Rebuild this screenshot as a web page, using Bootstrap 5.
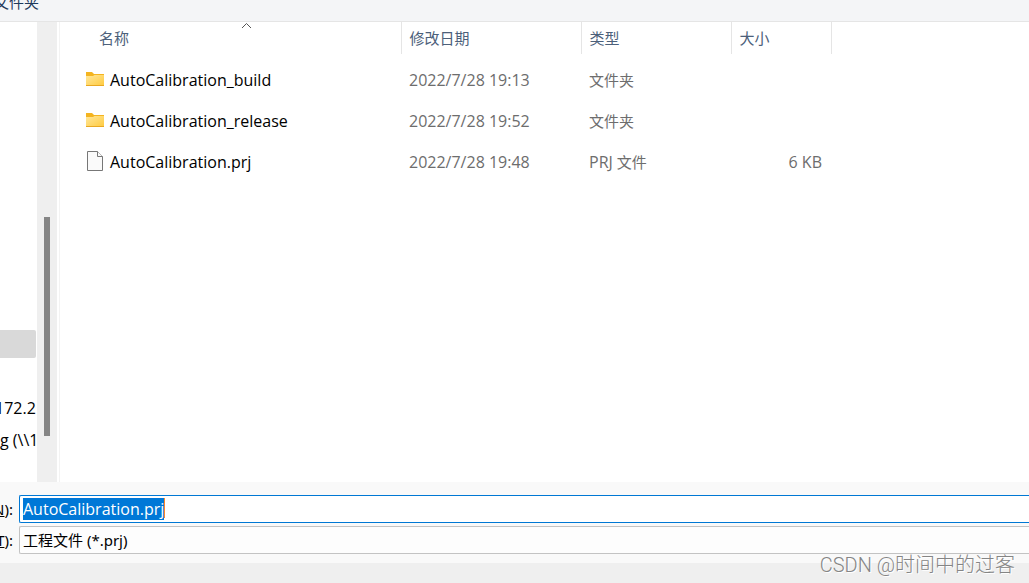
<!DOCTYPE html>
<html lang="zh-CN">
<head>
<meta charset="utf-8">
<meta name="viewport" content="width=device-width, initial-scale=1">
<title>另存为</title>
<link href="https://cdn.jsdelivr.net/npm/bootstrap@5.3.0/dist/css/bootstrap.min.css" rel="stylesheet">
<style>
body{font:15px/20px "Noto Sans","Noto Sans CJK SC",sans-serif;color:#000;background:#efefef}
.toolbar{height:22px;background:#f4f5f7;border-bottom:1px solid #e5e5e5;color:#1e395b}
.toolbar button{line-height:20px;margin:-8px 0 0 -6px;color:inherit;font-size:inherit}
.browser{background:#fff}
.tree{width:37px;padding-bottom:28px;gap:4px}
.tree a{height:28px;font:16px/28px "Open Sans",sans-serif;margin-right:1px;color:#000;white-space:nowrap;overflow:hidden}
.tree .current{background:#d9d9d9;border-radius:0 2px 2px 0;margin-bottom:32px}
.tree .clipped{text-indent:-5px}
.track{width:20px;background:#efefef;padding:195px 7px 46px}
.thumb{background:#858585;height:219px}
.pane{border-left:1px solid #f3f3f3;margin-left:2px}
.files{table-layout:fixed;width:771px}
.files th{height:32px;padding:0 8px;font-weight:400;color:#4c607a;border-right:1px solid #e5e5e5;position:relative}
.files th:first-child{padding-left:39px}
.files td{height:41px;padding:0 9px 0 8px;color:#6d6d6d}
.files td:first-child{padding-left:25px;color:#000}
.files .spacer td{height:5px}
.latin{font:16px/20px "Open Sans",sans-serif}
.icon{margin-right:5px}
.sort{top:0;left:181px}
.form-area{background:#f9f9f9;padding:13px 0 9px;gap:3px}
.form-area label{width:19px;padding-right:6px;height:28px;line-height:28px}
.field{height:28px;border:1px solid #c3c3c3;border-right:0;border-radius:2px 0 0 2px;background:#fdfdfd;padding:0 3px 1px;outline:0;color:#000;appearance:none;font:inherit}
.name-field{border-color:#0078d4;background:#fff;font:16px/20px "Open Sans",sans-serif}
.name-field::selection{background:#0078d7;color:#fff}
.caret{left:145px;top:3px;width:1px;height:20px;background:#ff8728}
.watermark{right:14px;bottom:4px;font:300 20px/28px Roboto,"Noto Sans CJK SC",sans-serif;color:#858585;text-shadow:1px 1px 0 #fff}
</style>
</head>
<body class="min-vh-100 d-flex flex-column overflow-hidden position-relative">
<header class="toolbar overflow-hidden"><button type="button" class="border-0 bg-transparent p-0 d-block">文件夹</button></header>
<main class="browser d-flex">
  <nav class="tree flex-shrink-0 d-flex flex-column justify-content-end" aria-label="导航">
    <a href="#" class="current d-block text-decoration-none" aria-label="当前文件夹"></a>
    <a href="#" class="clipped d-block text-decoration-none">172.20</a>
    <a href="#" class="d-block text-decoration-none">g (\\172</a>
  </nav>
  <div class="track flex-shrink-0"><div class="thumb"></div></div>
  <section class="pane flex-grow-1">
    <table class="files">
      <colgroup><col style="width:341px"><col style="width:180px"><col style="width:150px"><col style="width:100px"></colgroup>
      <thead><tr>
        <th scope="col">名称<svg class="sort position-absolute" width="11" height="7" viewBox="0 0 11 7" fill="none" stroke="#555"><path d="M1 6 5.500 1.500 10 6"/></svg></th>
        <th scope="col">修改日期</th><th scope="col">类型</th><th scope="col">大小</th>
      </tr></thead>
      <tbody>
        <tr class="spacer"><td colspan="4"></td></tr>
        <tr><td class="latin"><span class="d-flex align-items-center"><svg class="icon" width="20" height="20" viewBox="0 0 20 20"><defs><linearGradient id="fold" x2="1" y2="1"><stop stop-color="#ffe79b"/><stop offset="1" stop-color="#ffca3e"/></linearGradient></defs><path d="M1 2h6l2 2h10v4H1z" fill="#f4b420"/><path d="M1 6h7l1.500-1H19v11H1z" fill="url(#fold)"/><path d="M1 15.500h18" stroke="#e9a822"/></svg>AutoCalibration_build</span></td><td class="latin">2022/7/28 19:13</td><td>文件夹</td><td></td></tr>
        <tr><td class="latin"><span class="d-flex align-items-center"><svg class="icon" width="20" height="20" viewBox="0 0 20 20"><path d="M1 2h6l2 2h10v4H1z" fill="#f4b420"/><path d="M1 6h7l1.500-1H19v11H1z" fill="url(#fold)"/><path d="M1 15.500h18" stroke="#e9a822"/></svg>AutoCalibration_release</span></td><td class="latin">2022/7/28 19:52</td><td>文件夹</td><td></td></tr>
        <tr><td class="latin"><span class="d-flex align-items-center"><svg class="icon" width="20" height="22" viewBox="0 0 20 22" fill="#fafafa" stroke="#777"><path d="M2.500 .5h10l5 5v14h-15z"/><path d="M12.500 .5v5h5"/></svg>AutoCalibration.prj</span></td><td class="latin">2022/7/28 19:48</td><td><span class="latin">PRJ</span> 文件</td><td class="latin text-end">6 KB</td></tr>
      </tbody>
    </table>
  </section>
</main>
<form class="form-area d-flex flex-column">
  <div class="d-flex"><label for="fname" class="d-flex justify-content-end flex-shrink-0"><u>N</u>):</label>
    <div class="position-relative flex-grow-1 d-flex"><input id="fname" class="field name-field w-100" type="text" value="AutoCalibration.prj" autocomplete="off" spellcheck="false"><span class="caret position-absolute"></span></div></div>
  <div class="d-flex"><label for="ftype" class="d-flex justify-content-end flex-shrink-0"><u>T</u>):</label>
    <select id="ftype" class="field flex-grow-1"><option>工程文件 (*.prj)</option></select></div>
</form>
<div class="watermark position-absolute">CSDN @时间中的过客</div>
<script src="https://cdn.jsdelivr.net/npm/bootstrap@5.3.0/dist/js/bootstrap.bundle.min.js"></script>
<script>
const nameField=document.getElementById('fname');
nameField.focus();
nameField.select();
</script>
</body>
</html>
